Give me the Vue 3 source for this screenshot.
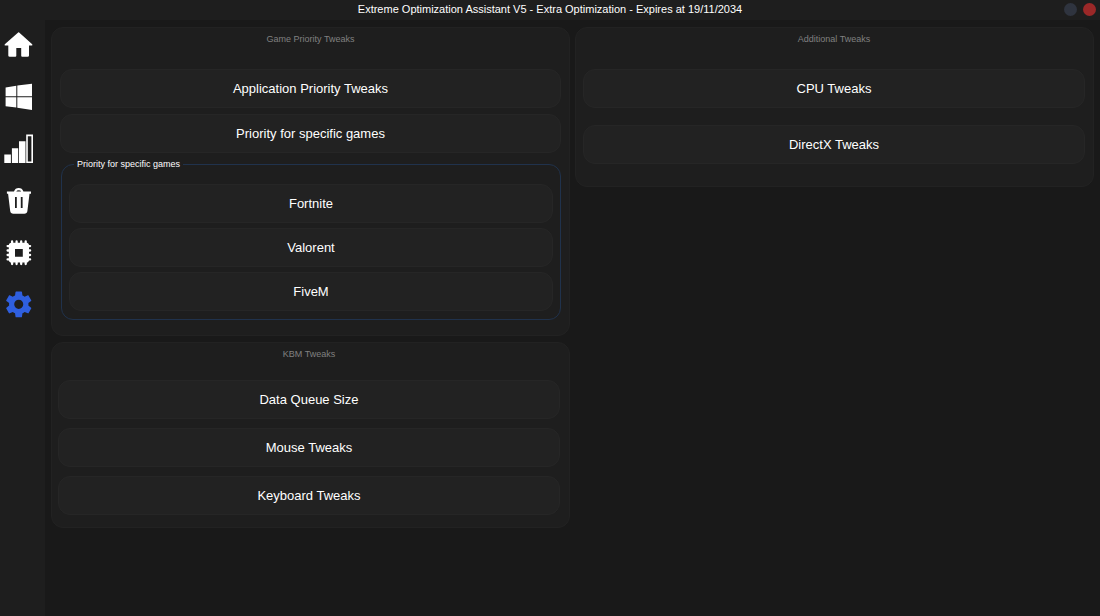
<script setup>
import { ref } from 'vue'

const active = ref('settings')

const navItems = [
  { id: 'home', label: 'Home' },
  { id: 'windows', label: 'Windows' },
  { id: 'network', label: 'Network' },
  { id: 'cleaner', label: 'Cleaner' },
  { id: 'hardware', label: 'Hardware' },
  { id: 'settings', label: 'Extra optimization' }
]
const priorityTweaks = ['Application Priority Tweaks', 'Priority for specific games']
const games = ['Fortnite', 'Valorent', 'FiveM']
const kbmTweaks = ['Data Queue Size', 'Mouse Tweaks', 'Keyboard Tweaks']
const additionalTweaks = ['CPU Tweaks', 'DirectX Tweaks']
</script>

<template>
  <div class="window">
    <header class="titlebar">
      <h1 class="title">Extreme Optimization Assistant V5 - Extra Optimization - Expires at 19/11/2034</h1>
      <div class="controls">
        <button class="dot minimize" type="button" aria-label="Minimize"></button>
        <button class="dot close" type="button" aria-label="Close"></button>
      </div>
    </header>

    <div class="body">
      <nav class="sidebar" aria-label="Sections">
        <button
          v-for="item in navItems"
          :key="item.id"
          type="button"
          class="nav-button"
          :class="{ active: active === item.id }"
          :aria-label="item.label"
          @click="active = item.id"
        >
          <svg v-if="item.id === 'home'" class="icon" viewBox="0 0 30 30">
            <path d="M14.6 2.3Q15.1 2.3 15.7 3L28.2 14.2Q28.9 15.4 27.7 15.5H25V25.4Q25 26.8 23.6 26.8H18.2Q17.2 26.8 17.2 25.8V18H12.3V25.8Q12.3 26.8 11.3 26.8H5.8Q4.3 26.8 4.3 25.4V15.5H1.3Q0 15.4 .8 14.2L13.6 3Q14.1 2.3 14.6 2.3Z" />
          </svg>
          <svg v-else-if="item.id === 'windows'" class="icon" viewBox="0 0 30 30">
            <path d="M1.6 5.4L12.3 3.7V14.2H1.6ZM13.3 3.5L28 1.8V14.2H13.3ZM1.6 15.2H12.3V25.6L1.6 24.3ZM13.3 15.2H28V28.1L13.3 25.8Z" />
          </svg>
          <svg v-else-if="item.id === 'network'" class="icon" viewBox="0 0 30 30">
            <path d="M.3 20.6H6.9V29H.3ZM7.9 14.3H14.2V29H7.9ZM15 7.3H21.5V29H15Z" />
            <path fill-rule="evenodd" d="M22.2 .6H29V29H22.2ZM23.8 2.2V27.4H27.4V2.2Z" />
          </svg>
          <svg v-else-if="item.id === 'cleaner'" class="icon" viewBox="0 0 30 30">
            <path fill-rule="evenodd" d="M2.9 5.4H10Q11.2 2 14.7 2T19.4 5.4H27V7.8H25.5L23.4 25Q23 27.8 20.3 27.8H9.3Q6.6 27.8 6.2 25L4.1 7.8H2.9ZM12.3 5.4H17.2Q16.6 4.3 14.7 4.3T12.3 5.4ZM11 11V22H12.8V11ZM16.8 11V22H18.6V11Z" />
          </svg>
          <svg v-else-if="item.id === 'hardware'" class="icon" viewBox="0 0 30 30">
            <path fill-rule="evenodd" d="M7.6 4.8H22.2Q25 4.8 25 7.6V21.8Q25 24.6 22.2 24.6H7.6Q4.8 24.6 4.8 21.8V7.6Q4.8 4.8 7.6 4.8ZM11 11V18.8H18.8V11Z" />
            <path class="pins" d="M8.1 3.4V7M12.6 3.4V7M17.2 3.4V7M21.7 3.4V7M8.1 23V26.1M12.6 23V26.1M17.2 23V26.1M21.7 23V26.1M3.6 8.1H7M3.6 12.5H7M3.6 17H7M3.6 21.4H7M23 8.1H26.1M23 12.5H26.1M23 17H26.1M23 21.4H26.1" />
          </svg>
          <svg v-else class="icon" viewBox="0.6 0.9 23.2 23.2">
            <path d="M19.43 12.98c.04-.32.07-.64.07-.98s-.03-.66-.07-.98l2.11-1.65c.19-.15.24-.42.12-.64l-2-3.46c-.12-.22-.39-.3-.61-.22l-2.49 1c-.52-.4-1.08-.73-1.69-.98l-.38-2.65A.49.49 0 0 0 14 2h-4c-.25 0-.46.18-.49.42l-.38 2.65c-.61.25-1.17.59-1.69.98l-2.49-1c-.23-.09-.49 0-.61.22l-2 3.46c-.13.22-.07.49.12.64l2.11 1.65c-.04.32-.07.65-.07.98s.03.66.07.98l-2.11 1.65c-.19.15-.24.42-.12.64l2 3.46c.12.22.39.3.61.22l2.49-1c.52.4 1.08.73 1.69.98l.38 2.65c.03.24.24.42.49.42h4c.25 0 .46-.18.49-.42l.38-2.65c.61-.25 1.17-.59 1.69-.98l2.49 1c.23.09.49 0 .61-.22l2-3.46c.12-.22.07-.49-.12-.64l-2.11-1.65zM12 15.5c-1.93 0-3.5-1.57-3.5-3.5s1.57-3.5 3.5-3.5 3.5 1.57 3.5 3.5-1.57 3.5-3.5 3.5z" />
          </svg>
        </button>
      </nav>

      <main class="content">
        <div class="column">
          <section class="panel">
            <h2 class="panel-title">Game Priority Tweaks</h2>
            <div class="stack snug">
              <button v-for="name in priorityTweaks" :key="name" type="button" class="tweak">{{ name }}</button>
            </div>
            <fieldset class="group">
              <legend class="group-title">Priority for specific games</legend>
              <div class="stack tight">
                <button v-for="name in games" :key="name" type="button" class="tweak">{{ name }}</button>
              </div>
            </fieldset>
          </section>

          <section class="panel kbm">
            <h2 class="panel-title">KBM Tweaks</h2>
            <div class="stack">
              <button v-for="name in kbmTweaks" :key="name" type="button" class="tweak">{{ name }}</button>
            </div>
          </section>
        </div>

        <div class="column">
          <section class="panel additional">
            <h2 class="panel-title">Additional Tweaks</h2>
            <div class="stack loose">
              <button v-for="name in additionalTweaks" :key="name" type="button" class="tweak">{{ name }}</button>
            </div>
          </section>
        </div>
      </main>
    </div>
  </div>
</template>

<style>
body {
  background: #191919;
}
</style>

<style scoped>
.window {
  display: flex;
  flex-direction: column;
  min-height: 100vh;
  background: #191919;
  color: #fff;
  font-family: "Liberation Sans", Arial, sans-serif;
}
button {
  padding: 0;
  border: 0;
  color: inherit;
  font-family: inherit;
  cursor: pointer;
}
.titlebar {
  display: grid;
  grid-template-columns: 1fr auto 1fr;
  align-items: center;
  height: 20px;
  background: #1e1e1e;
}
.title {
  grid-column: 2;
  margin: 0;
  font-size: 11px;
  line-height: 18px;
  font-weight: 400;
  align-self: start;
}
.controls {
  display: flex;
  justify-content: flex-end;
  gap: 6px;
  padding-right: 4px;
  align-self: start;
  padding-top: 3px;
}
.dot {
  width: 13px;
  height: 13px;
  border-radius: 50%;
}
.minimize {
  background: #2f343f;
}
.close {
  background: #9b2828;
}
.body {
  display: flex;
  flex: 1;
}
.sidebar {
  display: flex;
  flex-direction: column;
  gap: 2px;
  flex: none;
  width: 45px;
  background: #1e1e1e;
}
.nav-button {
  display: flex;
  align-items: center;
  height: 50px;
  padding-left: 4px;
  background: none;
}
.icon {
  width: 30px;
  height: 30px;
  fill: #fff;
}
.active .icon {
  fill: #2f5fdf;
}
.pins {
  stroke: #fff;
  stroke-width: 2.3;
  stroke-linecap: round;
}
.content {
  display: grid;
  grid-template-columns: 1fr 1fr;
  flex: 1;
  gap: 5px;
  align-items: start;
  padding: 7px 6px 0;
}
.column {
  display: flex;
  flex-direction: column;
  gap: 6px;
}
.panel {
  padding: 5px 8px 15px;
  border: 1px solid #222;
  border-radius: 12px;
  background: #1e1e1e;
}
.panel-title {
  margin: 0 0 24px;
  color: #808080;
  font-size: 9px;
  line-height: 12px;
  font-weight: 400;
  text-align: center;
}
.stack {
  display: flex;
  flex-direction: column;
  gap: 9px;
}
.tight {
  gap: 5px;
}
.snug {
  gap: 6px;
}
.loose {
  gap: 17px;
}
.tweak {
  height: 39px;
  border: 1px solid #262626;
  border-radius: 12px;
  background: #222;
  font-size: 13px;
  line-height: 16px;
}
.tweak:hover {
  background: #282828;
}
.kbm {
  padding: 5px 9px 12px 6px;
}
.kbm .panel-title {
  margin-bottom: 20px;
}
.additional {
  padding: 5px 8px 22px 7px;
}
.group {
  min-width: 0;
  margin: 5px 0 0 1px;
  padding: 14px 7px 8px;
  border: 1px solid #20324c;
  border-radius: 12px;
}
.group-title {
  margin-left: 5px;
  padding: 0 3px;
  font-size: 9px;
  line-height: 12px;
}
</style>
